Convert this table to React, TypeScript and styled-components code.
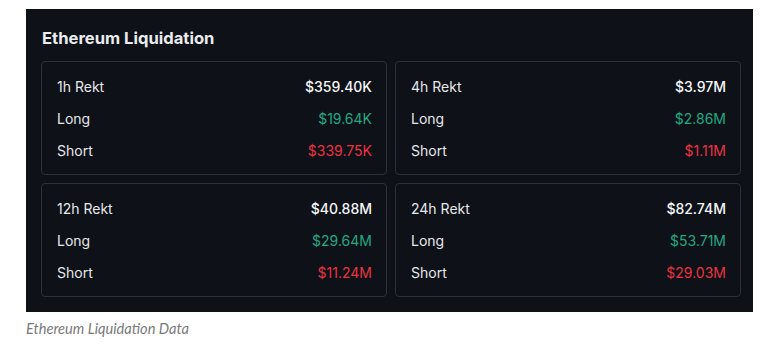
import React from 'react';
import styled, { createGlobalStyle } from 'styled-components';

const GlobalStyle = createGlobalStyle`
  html, body {
    margin: 0;
    padding: 0;
    background: #ffffff;
  }
`;

const Figure = styled.div`
  padding: 9px 0 0 26px;
`;

const Panel = styled.div`
  width: 727px;
  height: 303px;
  box-sizing: border-box;
  background: #0e1117;
  padding: 17px 12px 0 15px;
  font-family: Inter, "Noto Sans", sans-serif;
  color: #eaecef;
`;

const Title = styled.h2`
  margin: 0 0 11px 1px;
  font-size: 16.6px;
  font-weight: 700;
  line-height: 24px;
  color: #eaecef;
`;

const Grid = styled.div`
  display: grid;
  grid-template-columns: 346px 346px;
  gap: 8px;
`;

const Card = styled.div`
  height: 114px;
  box-sizing: border-box;
  border: 1px solid #2b3139;
  border-radius: 4px;
  padding: 8px 14px 0 15px;
  display: flex;
  flex-direction: column;
`;

const Row = styled.div`
  display: flex;
  justify-content: space-between;
  align-items: center;
  height: 32px;
  font-size: 14px;
`;

const Label = styled.span`
  color: #e6e8ec;
`;

const Value = styled.span<{ $tone: 'total' | 'long' | 'short' }>`
  color: ${p => (p.$tone === 'long' ? '#22a882' : p.$tone === 'short' ? '#ec3342' : '#f5f6f8')};
  font-weight: ${p => (p.$tone === 'total' ? 450 : 400)};
`;

const Caption = styled.div`
  margin-top: 8px;
  font-family: Lato, "Open Sans", sans-serif;
  font-style: italic;
  font-size: 14.6px;
  color: #7a7a7a;
`;

const data = [
  { period: '1h', total: '$359.40K', long: '$19.64K', short: '$339.75K' },
  { period: '4h', total: '$3.97M', long: '$2.86M', short: '$1.11M' },
  { period: '12h', total: '$40.88M', long: '$29.64M', short: '$11.24M' },
  { period: '24h', total: '$82.74M', long: '$53.71M', short: '$29.03M' },
];

const App = () => {
  return (
    <Figure>
      <GlobalStyle />
      <Panel>
        <Title>Ethereum Liquidation</Title>
        <Grid>
          {data.map(d => (
            <Card key={d.period}>
              <Row>
                <Label>{d.period} Rekt</Label>
                <Value $tone="total">{d.total}</Value>
              </Row>
              <Row>
                <Label>Long</Label>
                <Value $tone="long">{d.long}</Value>
              </Row>
              <Row>
                <Label>Short</Label>
                <Value $tone="short">{d.short}</Value>
              </Row>
            </Card>
          ))}
        </Grid>
      </Panel>
      <Caption>Ethereum Liquidation Data</Caption>
    </Figure>
  );
};

export default App;
